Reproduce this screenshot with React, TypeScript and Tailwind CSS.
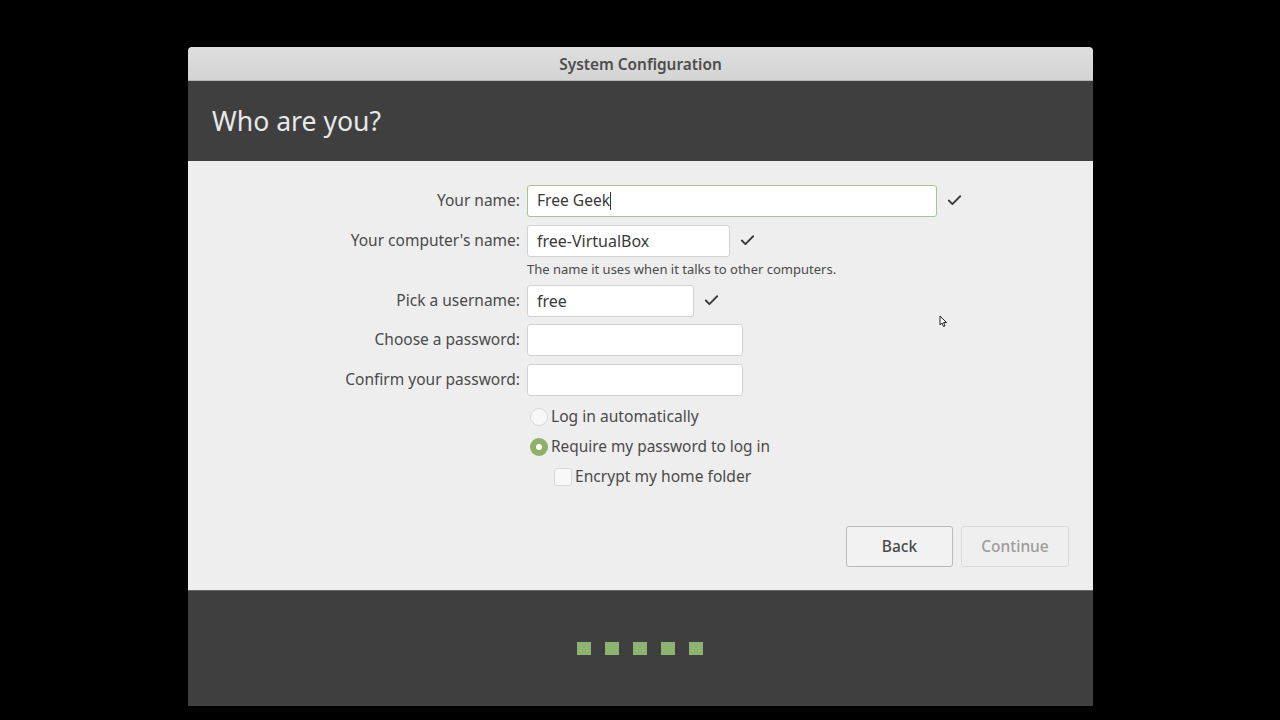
import { Check } from "lucide-react";

function Row({ label, width, value, caret, ok, focus }: { label: string; width: string; value?: string; caret?: boolean; ok?: boolean; focus?: boolean }) {
  return (
    <div className="flex items-center h-8">
      <div className="w-[332px] text-right text-[15.5px] text-[#4a4a4a]">{label}</div>
      <div
        className={`ml-[7px] h-8 ${width} rounded-[3px] border bg-white pl-[9px] flex items-center text-[#3a3a3a] ${
          focus ? "border-[#a9c28c] bg-[#fdfdfb] text-[15.6px]" : "border-[#d2d2d2] text-[16px]"
        }`}
      >
        <span>{value}</span>
        {caret && <span className="w-px h-[18px] bg-[#333]" />}
      </div>
      {ok && <Check className="ml-[9px] mb-[1px] text-[#3a3a3a]" size={17} strokeWidth={2.6} />}
    </div>
  );
}

export default function App() {
  return (
    <div className="relative w-[1280px] h-[720px] bg-black pt-[47px] pl-[188px] overflow-hidden font-['Noto_Sans',sans-serif]">
      <div className="w-[905px] h-[659px] flex flex-col rounded-t-[4px] overflow-hidden">
        <div className="h-[34px] shrink-0 pt-[2px] bg-gradient-to-b from-[#dedede] to-[#d4d4d4] border-b border-[#b5b5b5] flex items-center justify-center text-[15.4px] font-semibold text-[#4d4d4d]">
          System Configuration
        </div>
        <div className="h-[80px] shrink-0 pt-[2px] bg-[#3f3f3f] flex items-center pl-[24px] text-[26.6px] text-[#e8e8e8]">
          Who are you?
        </div>
        <div className="flex-1 bg-[#eeeeee] pt-[24px] flex flex-col">
          <Row label="Your name:" width="w-[410px]" value="Free Geek" caret ok focus />
          <div className="h-2" />
          <Row label="Your computer's name:" width="w-[203px]" value="free-VirtualBox" ok />
          <div className="ml-[339px] h-[28px] pb-[3px] flex items-center text-[13px] text-[#4a4a4a]">
            The name it uses when it talks to other computers.
          </div>
          <Row label="Pick a username:" width="w-[167px]" value="free" ok />
          <div className="h-[7px]" />
          <Row label="Choose a password:" width="w-[216px]" />
          <div className="h-2" />
          <Row label="Confirm your password:" width="w-[216px]" />
          <div className="ml-[342px] mt-[6px] h-[30px] flex items-center text-[15.6px] text-[#4a4a4a]">
            <span className="w-[18px] h-[18px] rounded-full bg-[#f8f8f8] border border-[#d8d8d8]" />
            <span className="ml-[3px]">Log in automatically</span>
          </div>
          <div className="ml-[342px] h-[30px] flex items-center text-[15.4px] text-[#4a4a4a]">
            <span className="w-[18px] h-[18px] rounded-full bg-[#8fb069] flex items-center justify-center">
              <span className="w-[6px] h-[6px] rounded-full bg-white" />
            </span>
            <span className="ml-[3px]">Require my password to log in</span>
          </div>
          <div className="ml-[366px] h-[30px] flex items-center text-[15.6px] text-[#4a4a4a]">
            <span className="w-[18px] h-[18px] rounded-[3px] bg-[#f8f8f8] border border-[#d8d8d8]" />
            <span className="ml-[3px]">Encrypt my home folder</span>
          </div>
          <div className="mt-[34px] pr-[24px] flex justify-end gap-2">
            <div className="w-[107px] h-[41px] rounded-[3px] border border-[#b9b9b9] bg-[#f2f2f2] flex items-center justify-center text-[15.5px] font-medium text-[#4a4a4a]">
              Back
            </div>
            <div className="w-[108px] h-[41px] rounded-[3px] border border-[#dadada] bg-[#efefef] flex items-center justify-center text-[15.5px] font-medium text-[#9c9c9c]">
              Continue
            </div>
          </div>
        </div>
        <div className="h-[116px] shrink-0 bg-[#3f3f3f] border-t border-[#666] flex items-center justify-center gap-[14px] pr-[2px]">
          {[0, 1, 2, 3, 4].map((i) => (
            <span key={i} className="w-[14px] h-[13px] bg-[#8eb270]" />
          ))}
        </div>
      </div>
      {/* mouse pointer */}
      <svg className="absolute left-[939px] top-[315px]" width="9" height="13" viewBox="0 0 9 13">
        <path d="M1 1v9l2-2 1.5 3.5 1.5-.6L4.6 7.5H7.5z" fill="#fff" stroke="#222" strokeWidth="1" />
      </svg>
    </div>
  );
}
